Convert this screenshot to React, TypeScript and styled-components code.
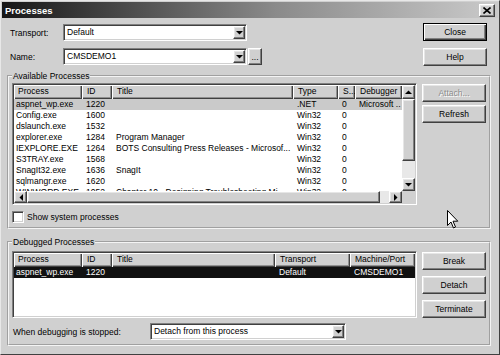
import React from "react";
import styled, { createGlobalStyle, css } from "styled-components";

const face = "#d0d0d0";

const GlobalStyle = createGlobalStyle`
  html, body { margin: 0; padding: 0; background: ${face}; }
  body {
    font-family: "Liberation Sans", Arial, sans-serif;
    font-size: 8.5px;
    color: #000;
  }
  * { box-sizing: border-box; }
`;

const raised = css`
  background: ${face};
  border: 1px solid;
  border-color: #fff #404040 #404040 #fff;
  box-shadow: inset -1px -1px #808080, inset 1px 1px #e6e6e6;
`;

const sunken = css`
  border: 1px solid;
  border-color: #808080 #fff #fff #808080;
  padding: 1px;
  box-shadow: inset 1px 1px #404040, inset -1px -1px ${face};
`;

const Window = styled.div`
  position: relative;
  width: 500px;
  height: 355px;
  background: ${face};
  border: 1px solid;
  border-color: #e8e8e8 #404040 #404040 #e8e8e8;
  padding: 1px;
  display: flex;
  flex-direction: column;
  overflow: hidden;
`;

const TitleBar = styled.div`
  height: 16px;
  flex: none;
  display: flex;
  align-items: center;
  justify-content: space-between;
  padding: 0 3px 0 3px;
  background: linear-gradient(to right, #161616, #8a8a8a 55%, #cacaca);
`;

const Title = styled.span`
  color: #fff;
  font-weight: bold;
  font-size: 9.5px;
`;

const TitleClose = styled.div`
  ${raised};
  width: 16px;
  height: 13px;
  display: flex;
  align-items: center;
  justify-content: center;
`;

const Body = styled.div`
  flex: 1;
  display: flex;
  flex-direction: column;
  padding: 0 7px 0 5px;
`;

const TopArea = styled.div`
  display: flex;
  justify-content: space-between;
  align-items: flex-start;
  padding: 5px 4px 0 3px;
`;

const FormGrid = styled.div`
  display: grid;
  grid-template-columns: 53px auto;
  row-gap: 7px;
  align-items: center;
  margin-top: 1px;
`;

const FieldRow = styled.div`
  display: flex;
  gap: 1px;
`;

const ButtonStack = styled.div<{ $gap: number; $top?: number }>`
  display: flex;
  flex-direction: column;
  gap: ${(p) => p.$gap}px;
  margin-top: ${(p) => p.$top ?? 0}px;
`;

const Button = styled.button<{ $default?: boolean; $w?: number }>`
  ${raised};
  width: ${(p) => p.$w ?? 64}px;
  height: 18px;
  padding: 0;
  margin: 0;
  font: inherit;
  color: #000;
  ${(p) =>
    p.$default &&
    css`
      border: 1px solid #000;
      box-shadow: inset 1px 1px #fff, inset -1px -1px #404040,
        inset -2px -2px #808080;
    `}
  &:disabled {
    color: #8c8c8c;
    text-shadow: 1px 1px #fff;
  }
`;

const SmallButton = styled(Button)`
  height: 17px;
  line-height: 10px;
`;

const ComboBox = styled.div<{ $w: number }>`
  ${sunken};
  width: ${(p) => p.$w}px;
  height: 17px;
  display: flex;
  background: #fff;
`;

const ComboText = styled.div`
  flex: 1;
  padding-left: 2px;
  line-height: 13px;
  white-space: nowrap;
`;

const DropButton = styled.div`
  ${raised};
  width: 12px;
  display: flex;
  align-items: center;
  justify-content: center;
`;

const Group = styled.fieldset<{ $top: number; $pad: string }>`
  margin: ${(p) => p.$top}px 0 0 0;
  padding: ${(p) => p.$pad};
  border: 2px groove #f4f4f4;
  min-width: 0;
`;

const Legend = styled.legend`
  padding: 0 1px;
  line-height: 12px;
`;

const GroupBody = styled.div`
  display: flex;
  justify-content: space-between;
  align-items: flex-start;
`;

const Column = styled.div<{ $gap: number }>`
  display: flex;
  flex-direction: column;
  gap: ${(p) => p.$gap}px;
`;

const ListFrame = styled.div<{ $w: number; $h: number }>`
  ${sunken};
  width: ${(p) => p.$w}px;
  height: ${(p) => p.$h}px;
  background: #fff;
`;

const ScrollGrid = styled.div`
  height: 100%;
  display: grid;
  grid-template-columns: 1fr 13px;
  grid-template-rows: 1fr 12px;
`;

const ListView = styled.div`
  overflow: hidden;
  min-width: 0;
  min-height: 0;
`;

const HeaderRow = styled.div`
  display: flex;
  height: 14px;
`;

const HeaderCell = styled.div<{ $w: number; $first?: boolean }>`
  flex: none;
  width: ${(p) => p.$w}px;
  line-height: 13px;
  padding-left: ${(p) => (p.$first ? 4 : 5)}px;
  background: ${face};
  box-shadow: inset 1px 1px #fff, inset -1px -1px #404040,
    inset -2px -2px #909090;
  white-space: nowrap;
  overflow: hidden;
`;

const Row = styled.div<{ $sel?: "inactive" | "active" }>`
  display: flex;
  height: 11px;
  line-height: 11px;
  background: ${(p) =>
    p.$sel === "active" ? "#111" : p.$sel === "inactive" ? "#cacaca" : "transparent"};
  color: ${(p) => (p.$sel === "active" ? "#fff" : "#000")};
`;

const Cell = styled.div<{ $w: number; $first?: boolean }>`
  flex: none;
  width: ${(p) => p.$w}px;
  padding-left: ${(p) => (p.$first ? 2 : 4)}px;
  white-space: nowrap;
  overflow: hidden;
`;

const VScroll = styled.div`
  display: flex;
  flex-direction: column;
  background: #e8e8e8;
`;

const HScroll = styled.div`
  display: flex;
  background: #e8e8e8;
`;

const ScrollButton = styled.div<{ $w?: number; $h?: number }>`
  ${raised};
  flex: none;
  width: ${(p) => (p.$w ? `${p.$w}px` : "auto")};
  height: ${(p) => (p.$h ? `${p.$h}px` : "auto")};
  display: flex;
  align-items: center;
  justify-content: center;
`;

const Thumb = styled.div<{ $w?: number; $h?: number }>`
  ${raised};
  flex: none;
  width: ${(p) => (p.$w ? `${p.$w}px` : "auto")};
  height: ${(p) => (p.$h ? `${p.$h}px` : "auto")};
`;

const Track = styled.div`
  flex: 1;
`;

const Corner = styled.div`
  background: ${face};
`;

const CheckRow = styled.label`
  display: flex;
  align-items: center;
  gap: 3px;
  height: 12px;
`;

const CheckBox = styled.span`
  ${sunken};
  width: 12px;
  height: 12px;
  background: #fff;
`;

const BottomRow = styled.div`
  display: grid;
  grid-template-columns: 137px auto;
  align-items: center;
  margin-top: 5px;
  padding-left: 1px;
`;

const Cursor = styled.svg`
  position: absolute;
  left: 446px;
  top: 209px;
`;

type Dir = "up" | "down" | "left" | "right";

const Arrow = ({ dir }: { dir: Dir }) => {
  const pts: Record<Dir, string> = {
    up: "0,4 7,4 3.5,0.5",
    down: "0,0 7,0 3.5,3.5",
    left: "4,0 4,7 0.5,3.5",
    right: "0,0 0,7 3.5,3.5",
  };
  const vertical = dir === "up" || dir === "down";
  return (
    <svg width={vertical ? 7 : 4} height={vertical ? 4 : 7}>
      <polygon points={pts[dir]} fill="#000" />
    </svg>
  );
};

const Combo = ({ w, text }: { w: number; text: string }) => (
  <ComboBox $w={w}>
    <ComboText>{text}</ComboText>
    <DropButton>
      <Arrow dir="down" />
    </DropButton>
  </ComboBox>
);

type Col = { label: string; w: number };

const availCols: Col[] = [
  { label: "Process", w: 68 },
  { label: "ID", w: 30 },
  { label: "Title", w: 181 },
  { label: "Type", w: 45 },
  { label: "S...", w: 17 },
  { label: "Debugger", w: 47 },
];

const availRows: string[][] = [
  ["aspnet_wp.exe", "1220", "", ".NET", "0", "Microsoft .."],
  ["Config.exe", "1600", "", "Win32", "0", ""],
  ["dslaunch.exe", "1532", "", "Win32", "0", ""],
  ["explorer.exe", "1284", "Program Manager", "Win32", "0", ""],
  ["IEXPLORE.EXE", "1264", "BOTS Consulting Press Releases - Microsof...", "Win32", "0", ""],
  ["S3TRAY.exe", "1568", "", "Win32", "0", ""],
  ["SnagIt32.exe", "1636", "SnagIt", "Win32", "0", ""],
  ["sqlmangr.exe", "1620", "", "Win32", "0", ""],
  ["WINWORD.EXE", "1052", "Chapter 10 - Designing Troubleshooting Mi...", "Win32", "0", ""],
];

const debugCols: Col[] = [
  { label: "Process", w: 68 },
  { label: "ID", w: 30 },
  { label: "Title", w: 163 },
  { label: "Transport", w: 75 },
  { label: "Machine/Port", w: 65 },
];

const debugRows: string[][] = [["aspnet_wp.exe", "1220", "", "Default", "CMSDEMO1"]];

const Table = ({
  cols,
  rows,
  selected,
}: {
  cols: Col[];
  rows: string[][];
  selected: "inactive" | "active";
}) => (
  <ListView>
    <HeaderRow>
      {cols.map((c, i) => (
        <HeaderCell key={c.label} $w={c.w} $first={i === 0}>
          {c.label}
        </HeaderCell>
      ))}
    </HeaderRow>
    {rows.map((r, ri) => (
      <Row key={ri} $sel={ri === 0 ? selected : undefined}>
        {r.map((v, ci) => (
          <Cell key={ci} $w={cols[ci].w} $first={ci === 0}>
            {v}
          </Cell>
        ))}
      </Row>
    ))}
  </ListView>
);

export default function App() {
  return (
    <>
      <GlobalStyle />
      <Window>
        <TitleBar>
          <Title>Processes</Title>
          <TitleClose>
            <svg width="8" height="7">
              <path d="M0.5 0.5 L7.5 6.5 M7.5 0.5 L0.5 6.5" stroke="#000" strokeWidth="1.6" />
            </svg>
          </TitleClose>
        </TitleBar>
        <Body>
          <TopArea>
            <FormGrid>
              <span>Transport:</span>
              <Combo w={184} text="Default" />
              <span>Name:</span>
              <FieldRow>
                <Combo w={184} text="CMSDEMO1" />
                <SmallButton $w={14}>...</SmallButton>
              </FieldRow>
            </FormGrid>
            <ButtonStack $gap={7}>
              <Button $default>Close</Button>
              <Button>Help</Button>
            </ButtonStack>
          </TopArea>

          <Group $top={4} $pad="1px 3px 4px 3px">
            <Legend>Available Processes</Legend>
            <GroupBody>
              <Column $gap={6}>
                <ListFrame $w={405} $h={122}>
                  <ScrollGrid>
                    <Table cols={availCols} rows={availRows} selected="inactive" />
                    <VScroll>
                      <ScrollButton $h={14}>
                        <Arrow dir="up" />
                      </ScrollButton>
                      <Thumb $h={62} />
                      <Track />
                      <ScrollButton $h={13}>
                        <Arrow dir="down" />
                      </ScrollButton>
                    </VScroll>
                    <HScroll>
                      <ScrollButton $w={13}>
                        <Arrow dir="left" />
                      </ScrollButton>
                      <Thumb $w={353} />
                      <Track />
                      <ScrollButton $w={13}>
                        <Arrow dir="right" />
                      </ScrollButton>
                    </HScroll>
                    <Corner />
                  </ScrollGrid>
                </ListFrame>
                <CheckRow>
                  <CheckBox />
                  <span>Show system processes</span>
                </CheckRow>
              </Column>
              <ButtonStack $gap={3} $top={1}>
                <Button disabled>Attach...</Button>
                <Button>Refresh</Button>
              </ButtonStack>
            </GroupBody>
          </Group>

          <Group $top={7} $pad="3px 3px 4px 3px">
            <Legend>Debugged Processes</Legend>
            <GroupBody>
              <ListFrame $w={405} $h={67}>
                <Table cols={debugCols} rows={debugRows} selected="active" />
              </ListFrame>
              <ButtonStack $gap={6} $top={1}>
                <Button>Break</Button>
                <Button>Detach</Button>
                <Button>Terminate</Button>
              </ButtonStack>
            </GroupBody>
            <BottomRow>
              <span>When debugging is stopped:</span>
              <Combo w={196} text="Detach from this process" />
            </BottomRow>
          </Group>
        </Body>
        <Cursor width="12" height="19" viewBox="0 0 12 19">
          <path
            d="M0.5 0.5 L0.5 15.5 L4 12 L6.5 18 L8.5 17 L6 11.2 L10.8 11.2 Z"
            fill="#fff"
            stroke="#000"
            strokeWidth="1"
          />
        </Cursor>
      </Window>
    </>
  );
}
